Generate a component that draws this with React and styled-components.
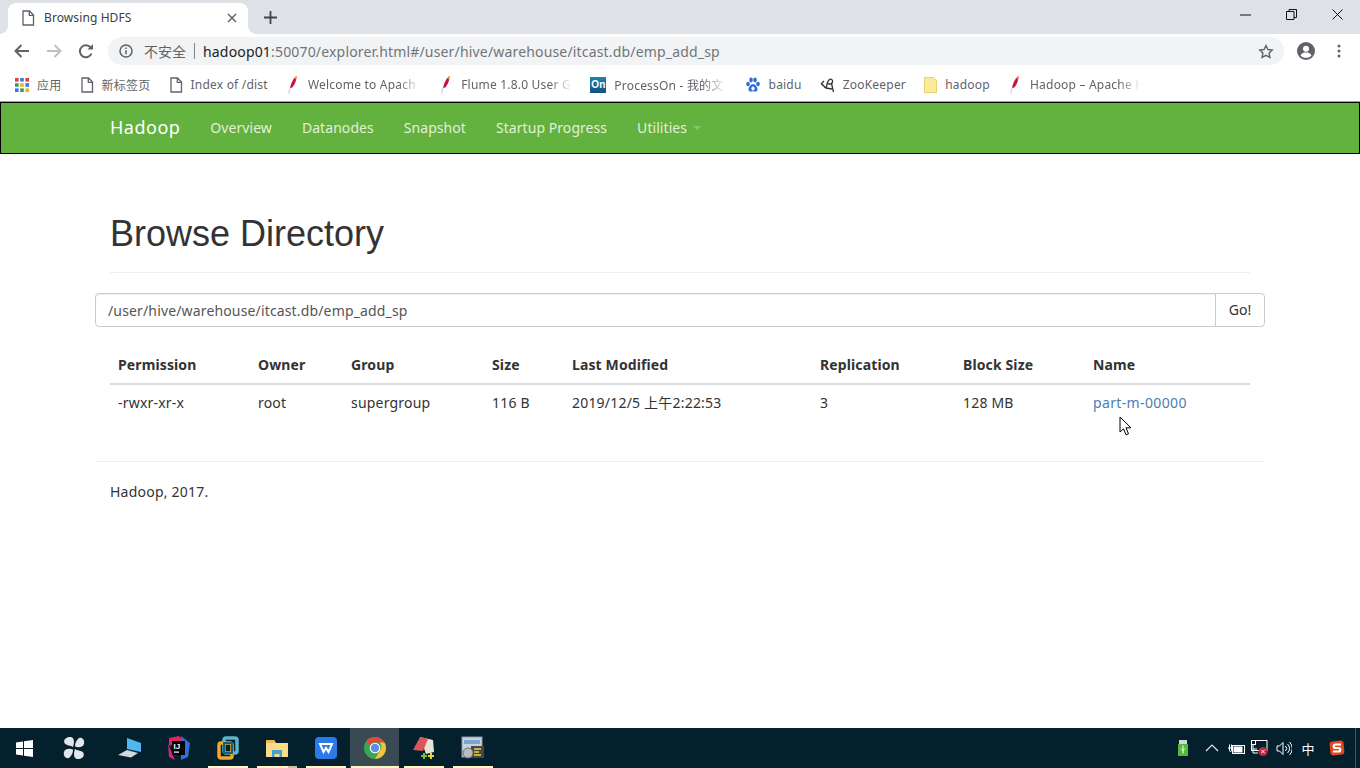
import React from "react";
import styled, { createGlobalStyle } from "styled-components";

const GlobalStyle = createGlobalStyle`
  html, body { margin: 0; padding: 0; height: 100%; background: #fff; }
  body {
    font-family: "Noto Sans", "Noto Sans CJK SC", sans-serif;
    font-size: 14px;
    color: #333;
    overflow: hidden;
  }
  * { box-sizing: border-box; }
`;

const PageIcon = () => (
  <svg width="14" height="16" viewBox="0 0 14 16" fill="none" stroke="#5f6368" strokeWidth="1.3">
    <path d="M2 1h6.500L12.500 5v10H2z" />
    <path d="M8.300 1v4.300h4.200" />
  </svg>
);

const Feather = () => (
  <svg width="14" height="18" viewBox="0 0 14 18">
    <path d="M10.500 0C7.500 2 5 7 4 12l2.300-.5C8.500 9 10.500 5 10.500 0z" fill="#c8123c" />
    <path d="M10.500 0c-.8 1-1.500 2-2 3l2 .2c.1-1 .1-2 0-3.200z" fill="#f29a3c" />
    <path d="M4 12C3.500 14 3 16 2.500 17.500" stroke="#d8cfe0" strokeWidth="1.200" fill="none" />
  </svg>
);

const AppsGrid = () => {
  const colors = ["#d8433b", "#3b78e7", "#d8433b", "#3b9c55", "#f2b01e", "#3b78e7", "#3b78e7", "#3b9c55", "#f2b01e"];
  return (
    <svg width="14" height="14" viewBox="0 0 14 14">
      {colors.map((c, i) => (
        <rect key={i} x={(i % 3) * 5.2} y={Math.floor(i / 3) * 5.2} width="3.600" height="3.600" fill={c} />
      ))}
    </svg>
  );
};

const OnLogo = () => <OnBadge>On</OnBadge>;

const Paw = () => (
  <svg width="16" height="16" viewBox="0 0 16 16" fill="#2f6fdc">
    <ellipse cx="3" cy="7" rx="1.800" ry="2.300" />
    <ellipse cx="6" cy="3" rx="1.800" ry="2.400" />
    <ellipse cx="10" cy="3" rx="1.800" ry="2.400" />
    <ellipse cx="13" cy="7" rx="1.800" ry="2.300" />
    <path d="M8 7c-2 0-4.500 3-4.500 5.500 0 2 2 2.500 4.500 1.800 2.500.7 4.500.2 4.500-1.800C12.500 10 10 7 8 7z" />
    <ellipse cx="8" cy="11.500" rx="1.600" ry="2" fill="#fff" />
  </svg>
);

const ZooIcon = () => (
  <svg width="15" height="16" viewBox="0 0 15 16" fill="none" stroke="#333" strokeWidth="1.300">
    <path d="M1 7c2 0 3 3 5 4 1-3 1-6 3-8 2-2 4 0 3.500 2S9.500 7.500 8 6.500" />
    <path d="M11.500 6.500L13.500 15M6 11l6 1M4 4L1 7" />
  </svg>
);

const FolderIcon = () => (
  <svg width="13" height="16" viewBox="0 0 13 16">
    <path d="M.5.500h9l3 3v12H.500z" fill="#fde99a" stroke="#e8cf78" />
  </svg>
);

const bookmarks = [
  { icon: <AppsGrid />, label: "应用" },
  { icon: <PageIcon />, label: "新标签页" },
  { icon: <PageIcon />, label: "Index of /dist" },
  { icon: <Feather />, label: "Welcome to Apach", clip: 113 },
  { icon: <Feather />, label: "Flume 1.8.0 User Gu", clip: 111 },
  { icon: <OnLogo />, label: "ProcessOn - 我的文", clip: 112 },
  { icon: <Paw />, label: "baidu" },
  { icon: <ZooIcon />, label: "ZooKeeper" },
  { icon: <FolderIcon />, label: "hadoop" },
  { icon: <Feather />, label: "Hadoop – Apache H", clip: 111 },
];

const columns = [
  { title: "Permission", width: 140, value: "-rwxr-xr-x" },
  { title: "Owner", width: 93, value: "root" },
  { title: "Group", width: 141, value: "supergroup" },
  { title: "Size", width: 80, value: "116 B" },
  { title: "Last Modified", width: 248, value: "2019/12/5 上午2:22:53" },
  { title: "Replication", width: 143, value: "3" },
  { title: "Block Size", width: 130, value: "128 MB" },
  { title: "Name", width: 165, value: "part-m-00000", link: true },
];

const navLinks = ["Overview", "Datanodes", "Snapshot", "Startup Progress"];

const runningApps = [
  {
    key: "laptop",
    icon: (
      <svg width="24" height="20" viewBox="0 0 24 20">
        <path d="M9 0l14 5v9l-14-3z" fill="#4fb6ee" />
        <path d="M0 17l9-5 11 3-7 4.500z" fill="#cfd8dc" />
      </svg>
    ),
  },
  {
    key: "idea",
    icon: (
      <svg width="24" height="24" viewBox="0 0 24 24">
        <path d="M2 2l10-2 4 4-14 6z" fill="#e0245e" />
        <path d="M14 0l9 7-2 14-7 3z" fill="#2f6fdc" />
        <path d="M1 8l7 16-6-3z" fill="#d6237f" />
        <rect x="5" y="5" width="13" height="14" fill="#000" />
        <text x="6.500" y="13" fontSize="8" fontWeight="700" fill="#fff" fontFamily="Liberation Sans">IJ</text>
        <rect x="7" y="15.500" width="5" height="1.200" fill="#fff" />
      </svg>
    ),
  },
  {
    key: "vmware",
    running: true,
    icon: (
      <svg width="22" height="24" viewBox="0 0 22 24" fill="none">
        <rect x="7" y="2" width="13" height="15" rx="2" stroke="#5fb4c8" strokeWidth="3.500" />
        <rect x="2" y="7" width="13" height="15" rx="2" stroke="#f0a92c" strokeWidth="3.500" />
        <rect x="7" y="7" width="8" height="10" stroke="#1a5f76" strokeWidth="2" />
      </svg>
    ),
  },
  {
    key: "files",
    running: true,
    stacked: true,
    icon: (
      <svg width="24" height="20" viewBox="0 0 24 20">
        <path d="M1 2h8l2 3h12v14H1z" fill="#f8dc8a" />
        <path d="M1 2h8l2 3H1z" fill="#e9bd55" />
        <path d="M7 12h10v7h-2.500v-3h-5v3H7z" fill="#3ea6c9" />
      </svg>
    ),
  },
  {
    key: "wps",
    running: true,
    icon: (
      <svg width="22" height="22" viewBox="0 0 22 22">
        <rect width="22" height="22" rx="4" fill="#2a7bea" />
        <path d="M5 7h12l-3.500 8-2.500-4-2.500 4z" fill="none" stroke="#fff" strokeWidth="2" />
      </svg>
    ),
  },
  {
    key: "chrome",
    active: true,
    running: true,
    icon: (
      <svg width="24" height="24" viewBox="0 0 24 24">
        <circle cx="12" cy="12" r="11" fill="#3aa655" />
        <path d="M12 1a11 11 0 0 1 9.500 5.500H12a5.500 5.500 0 0 0-5 3L3 5a11 11 0 0 1 9-4z" fill="#dd4b3e" />
        <path d="M21.500 6.500A11 11 0 0 1 12 23l4.700-8.300a5.500 5.500 0 0 0 0-8.200z" fill="#f6c433" />
        <circle cx="12" cy="12" r="5.300" fill="#fff" />
        <circle cx="12" cy="12" r="4.200" fill="#5d8fe8" />
      </svg>
    ),
  },
  {
    key: "eraser",
    running: true,
    icon: (
      <svg width="24" height="24" viewBox="0 0 24 24">
        <path d="M8 1l13 3 1 12-8 2z" fill="#e9e4d4" />
        <path d="M8 1l8 2-5 12-10-1z" fill="#d9565c" />
        <path d="M9 19h2v-2h2v2h2v2h-2v2h-2v-2H9z" fill="#6fc13a" />
        <path d="M16 19h2v-2h2v2h2v2h-2v2h-2v-2h-2z" fill="#f0d02c" />
      </svg>
    ),
  },
  {
    key: "tool",
    running: true,
    icon: (
      <svg width="24" height="24" viewBox="0 0 24 24">
        <rect x="1" y="1" width="20" height="20" fill="#c7d3dc" stroke="#8a98a3" />
        <rect x="3" y="4" width="16" height="4" fill="#7aa6d6" />
        <rect x="10" y="10" width="13" height="12" fill="#48483a" />
        <path d="M13 13h7M13 16h5M13 19h7" stroke="#e6d24c" strokeWidth="1.500" />
        <circle cx="7" cy="17" r="5" fill="#b8bcc0" stroke="#6d7276" />
      </svg>
    ),
  },
];

function App() {
  return (
    <>
      <GlobalStyle />
      <Screen>
        <TabStrip>
          <Tab>
            <PageIcon />
            <TabTitle>Browsing HDFS</TabTitle>
            <svg width="10" height="10" viewBox="0 0 10 10" stroke="#5f6368" strokeWidth="1.500">
              <path d="M1 1l8 8M9 1l-8 8" />
            </svg>
          </Tab>
          <NewTab>
            <svg width="13" height="13" viewBox="0 0 13 13" stroke="#444" strokeWidth="1.800">
              <path d="M6.500 0v13M0 6.500h13" />
            </svg>
          </NewTab>
          <WindowControls>
            <WindowButton>
              <svg width="11" height="2" viewBox="0 0 11 2" stroke="#111"><path d="M0 1h11" /></svg>
            </WindowButton>
            <WindowButton>
              <svg width="11" height="11" viewBox="0 0 11 11" fill="none" stroke="#111">
                <path d="M.5 2.500h7.500v8H.500z" />
                <path d="M3 2.500V.500h7.500v8H8" />
              </svg>
            </WindowButton>
            <WindowButton>
              <svg width="11" height="11" viewBox="0 0 11 11" stroke="#111"><path d="M.5.500l10 10M10.500.500l-10 10" /></svg>
            </WindowButton>
          </WindowControls>
        </TabStrip>

        <Toolbar>
          <NavButtons>
            <svg width="16" height="14" viewBox="0 0 16 14" fill="none" stroke="#5f6368" strokeWidth="2">
              <path d="M15 7H2M7.500 1L1.500 7l6 6" />
            </svg>
            <svg width="16" height="14" viewBox="0 0 16 14" fill="none" stroke="#bdc1c6" strokeWidth="2">
              <path d="M1 7h13M8.500 1l6 6-6 6" />
            </svg>
            <svg width="16" height="16" viewBox="0 0 16 16" fill="none" stroke="#5f6368" strokeWidth="2">
              <path d="M13.500 10.500a6 6 0 1 1-.6-5.500" />
              <path d="M15 1v5.500H9.500z" fill="#5f6368" stroke="none" />
            </svg>
          </NavButtons>
          <Omnibox>
            <svg width="14" height="14" viewBox="0 0 14 14" fill="none" stroke="#5f6368" strokeWidth="1.500">
              <circle cx="7" cy="7" r="6" />
              <path d="M7 6.200v4M7 3.500v1.500" />
            </svg>
            <Insecure>不安全</Insecure>
            <Separator />
            <Url>
              <strong>hadoop01</strong>:50070/explorer.html#/user/hive/warehouse/itcast.db/emp_add_sp
            </Url>
            <svg width="16" height="15" viewBox="0 0 16 15" fill="none" stroke="#5f6368" strokeWidth="1.400">
              <path d="M8 1.500l1.900 4 4.400.5-3.200 3 .8 4.400L8 11.300l-3.900 2.100.8-4.400-3.200-3 4.400-.5z" />
            </svg>
          </Omnibox>
          <ProfileArea>
            <svg width="18" height="18" viewBox="0 0 18 18">
              <circle cx="9" cy="9" r="9" fill="#5f6368" />
              <circle cx="9" cy="6.800" r="3" fill="#fff" />
              <path d="M3.500 13.500c1-2.500 3.500-3 5.500-3s4.500.5 5.500 3c-1.300 1.500-3.300 2.300-5.500 2.300s-4.200-.8-5.500-2.300z" fill="#fff" />
            </svg>
            <svg width="4" height="14" viewBox="0 0 4 14" fill="#5f6368">
              <circle cx="2" cy="2" r="1.500" />
              <circle cx="2" cy="7" r="1.500" />
              <circle cx="2" cy="12" r="1.500" />
            </svg>
          </ProfileArea>
        </Toolbar>

        <BookmarksBar>
          {bookmarks.map((b) => (
            <Bookmark key={b.label}>
              <BookmarkIcon>{b.icon}</BookmarkIcon>
              <BookmarkLabel $clip={b.clip}>{b.label}</BookmarkLabel>
            </Bookmark>
          ))}
        </BookmarksBar>

        <Navbar>
          <Brand>Hadoop</Brand>
          {navLinks.map((l) => (
            <NavLink key={l}>{l}</NavLink>
          ))}
          <NavLink>
            Utilities<Caret />
          </NavLink>
        </Navbar>

        <Main>
          <PageHeader>
            <Heading>Browse Directory</Heading>
          </PageHeader>

          <InputGroup>
            <PathInput readOnly value="/user/hive/warehouse/itcast.db/emp_add_sp" />
            <GoButton>Go!</GoButton>
          </InputGroup>

          <TableWrap>
            <FileTable>
              <colgroup>
                {columns.map((c) => (
                  <col key={c.title} width={c.width} />
                ))}
              </colgroup>
              <thead>
                <tr>
                  {columns.map((c) => (
                    <HeadCell key={c.title}>{c.title}</HeadCell>
                  ))}
                </tr>
              </thead>
              <tbody>
                <tr>
                  {columns.map((c) => (
                    <BodyCell key={c.title}>
                      {c.link ? <FileLink>{c.value}</FileLink> : c.value}
                    </BodyCell>
                  ))}
                </tr>
              </tbody>
            </FileTable>
          </TableWrap>

          <Rule />
          <Footer>Hadoop, 2017.</Footer>
        </Main>

        <Taskbar>
          <StartCell>
            <svg width="17" height="17" viewBox="0 0 17 17" fill="#fff">
              <path d="M0 2.500l7-1v6.500H0zM8 1.300L17 0v8H8zM0 9h7v6.500l-7-1zM8 9h9v8l-9-1.300z" />
            </svg>
          </StartCell>
          <SwirlCell>
            <svg width="22" height="24" viewBox="0 0 22 24" fill="#dfe6ec">
              <path d="M10 11C8 9 3 10 1.500 7 0 3 4 .5 8 1c3.500.5 3.500 6 2 10z" />
              <path d="M12 10.500c0-3 1-6 4-8.500 3-1 6 2 5 6-.8 3-5 4-9 2.500z" />
              <path d="M12 13c2 2 7 1 8.500 4 1.500 4-2.500 6.500-6.500 6-3.500-.5-3.500-6-2-10z" />
              <path d="M10 13.500c0 3-1 6-4 8.500-3 1-6-2-5-6 .8-3 5-4 9-2.500z" />
            </svg>
          </SwirlCell>
          {runningApps.map((app) => (
            <AppCell key={app.key} $active={app.active} $running={app.running} $stacked={app.stacked}>
              {app.icon}
            </AppCell>
          ))}
          <Tray>
            <TrayCell $wide>
              <svg width="10" height="16" viewBox="0 0 10 16">
                <rect x="1" y="0" width="8" height="4" fill="#cfd8dc" />
                <rect y="4" width="10" height="12" fill="#54b83a" />
                <path d="M5 5.500v8M3 8.500l2 2 2-2" stroke="#fff" fill="none" />
              </svg>
            </TrayCell>
            <TrayCell>
              <svg width="14" height="8" viewBox="0 0 14 8" fill="none" stroke="#e6e6e6" strokeWidth="1.200">
                <path d="M1 7l6-6 6 6" />
              </svg>
            </TrayCell>
            <TrayCell>
              <svg width="17" height="11" viewBox="0 0 17 11" fill="none" stroke="#fff">
                <rect x="4.500" y="2.500" width="12" height="8" />
                <rect x="6" y="4" width="8" height="5" fill="#fff" />
                <path d="M0 5h4M1.500 1.500v6a1 1 0 0 0 2 0v-6" />
              </svg>
            </TrayCell>
            <TrayCell>
              <svg width="18" height="16" viewBox="0 0 18 16" fill="none" stroke="#fff">
                <rect x=".5" y=".5" width="15.500" height="10" />
                <rect x=".5" y=".5" width="4" height="4" fill="#04202d" />
                <path d="M2 5v8h5M2 9h4" />
                <circle cx="12" cy="11.500" r="4.500" fill="#c8203f" stroke="none" />
                <path d="M10.200 9.700l3.600 3.600M13.800 9.700l-3.600 3.600" />
              </svg>
            </TrayCell>
            <TrayCell>
              <svg width="16" height="15" viewBox="0 0 16 15" fill="none" stroke="#fff">
                <path d="M1 5h2.500L7 1.500v12L3.500 10H1z" />
                <path d="M9.500 5a3.500 3.500 0 0 1 0 5M11.500 3a6 6 0 0 1 0 9M13.500 1a9 9 0 0 1 0 13" />
              </svg>
            </TrayCell>
            <TrayCell>
              <ImeLabel>中</ImeLabel>
            </TrayCell>
            <TrayCell $wide>
              <svg width="16" height="16" viewBox="0 0 16 16">
                <rect x="1" y="1" width="14" height="14" rx="3" fill="#e2471f" transform="rotate(-6 8 8)" />
                <path d="M12 4.500H6.500a1.500 1.500 0 0 0 0 3.500h3a1.500 1.500 0 0 1 0 3.500H4" fill="none" stroke="#fff" strokeWidth="2.200" />
              </svg>
            </TrayCell>
          </Tray>
          <ShowDesktop />
        </Taskbar>

        <Cursor>
          <svg width="13" height="20" viewBox="0 0 13 20">
            <path d="M1 1v15l3.500-3.200 2.500 6 2.500-1-2.500-6H12z" fill="#fff" stroke="#000" />
          </svg>
        </Cursor>
      </Screen>
    </>
  );
}

const Screen = styled.div`
  position: relative;
  display: flex;
  flex-direction: column;
  width: 1360px;
  height: 768px;
`;

const TabStrip = styled.div`
  display: flex;
  align-items: flex-end;
  height: 34px;
  background: #dee1e6;
  padding-left: 8px;
`;

const Tab = styled.div`
  position: relative;
  display: flex;
  align-items: center;
  width: 240px;
  height: 31px;
  padding: 0 11px 2px 13px;
  background: #fff;
  border-radius: 8px 8px 0 0;

  &::before,
  &::after {
    content: "";
    position: absolute;
    bottom: 0;
    width: 8px;
    height: 8px;
  }
  &::before {
    left: -8px;
    background: radial-gradient(circle at 0 0, #dee1e6 7.500px, #fff 8px);
  }
  &::after {
    right: -8px;
    background: radial-gradient(circle at 100% 0, #dee1e6 7.500px, #fff 8px);
  }
`;

const TabTitle = styled.span`
  flex: 1;
  margin-left: 9px;
  font-size: 12px;
  color: #3c4043;
  letter-spacing: 0.1px;
`;

const NewTab = styled.div`
  display: flex;
  align-items: center;
  height: 31px;
  margin-left: 16px;
  padding-bottom: 2px;
`;

const WindowControls = styled.div`
  display: flex;
  align-self: flex-start;
  margin-left: auto;
`;

const WindowButton = styled.div`
  display: flex;
  align-items: center;
  justify-content: center;
  width: 46px;
  height: 29px;
`;

const Toolbar = styled.div`
  display: flex;
  align-items: center;
  height: 34px;
  background: #fff;
`;

const NavButtons = styled.div`
  display: flex;
  align-items: center;
  gap: 16px;
  width: 108px;
  padding-left: 14px;
`;

const Omnibox = styled.div`
  display: flex;
  align-items: center;
  width: 1176px;
  height: 28px;
  padding: 0 10px 0 11px;
  background: #f1f3f4;
  border-radius: 14px;
`;

const Insecure = styled.span`
  margin-left: 11px;
  font-size: 14px;
  color: #5f6368;
`;

const Separator = styled.span`
  width: 1px;
  height: 16px;
  margin: 0 8px;
  background: #80868b;
`;

const Url = styled.span`
  flex: 1;
  font-size: 14px;
  letter-spacing: 0.17px;
  color: #70757a;

  strong {
    font-weight: 400;
    color: #202124;
  }
`;

const ProfileArea = styled.div`
  display: flex;
  align-items: center;
  gap: 22px;
  padding-left: 13px;
`;

const BookmarksBar = styled.div`
  display: flex;
  align-items: center;
  gap: 18.200px;
  height: 34px;
  padding-left: 15px;
  background: #fff;
  border-bottom: 1px solid #9aa0a6;
`;

const Bookmark = styled.div`
  display: flex;
  align-items: center;
  gap: 8px;
  font-size: 12px;
  letter-spacing: 0.2px;
  color: #5f6368;
`;

const BookmarkIcon = styled.span`
  display: flex;
  align-items: center;
  justify-content: center;
  height: 18px;
`;

const BookmarkLabel = styled.span`
  white-space: nowrap;
  ${(p) =>
    p.$clip &&
    `
    width: ${p.$clip}px;
    mask-image: linear-gradient(to right, #000 80%, transparent);
  `}
`;

const OnBadge = styled.span`
  display: flex;
  align-items: center;
  justify-content: center;
  width: 16px;
  height: 16px;
  background: linear-gradient(#1f83ad, #12507d);
  color: #fff;
  font-family: "Liberation Sans", sans-serif;
  font-size: 10px;
  font-weight: 700;
`;

const Navbar = styled.nav`
  display: flex;
  align-items: center;
  height: 52px;
  padding: 0 0 2px 109px;
  background: #63b13e;
  border: 1px solid #000;
`;

const Brand = styled.span`
  margin-right: 30px;
  font-size: 18px;
  letter-spacing: 0.5px;
  color: #fff;
`;

const NavLink = styled.span`
  display: flex;
  align-items: center;
  margin-right: 30px;
  font-size: 14px;
  letter-spacing: 0.06px;
  color: #e3f0d9;
`;

const Caret = styled.span`
  width: 0;
  height: 0;
  margin-left: 6px;
  margin-top: 2px;
  border-top: 4px solid #8fc173;
  border-left: 4px solid transparent;
  border-right: 4px solid transparent;
`;

const Main = styled.main`
  flex: 1;
  width: 1170px;
  margin: 0 auto;
`;

const PageHeader = styled.div`
  margin: 60px 15px 20px;
  padding-bottom: 8px;
  border-bottom: 1px solid #eee;
`;

const Heading = styled.h1`
  margin: 0 0 10px;
  font-family: "Liberation Sans", Arial, sans-serif;
  font-size: 36px;
  font-weight: 500;
  line-height: 1.1;
  color: #333;
`;

const InputGroup = styled.div`
  display: flex;
  height: 34px;
`;

const PathInput = styled.input`
  flex: 1;
  padding: 7px 12px 5px;
  font-family: inherit;
  font-size: 14px;
  letter-spacing: 0.15px;
  color: #555;
  border: 1px solid #ccc;
  border-radius: 4px 0 0 4px;
  box-shadow: inset 0 1px 1px rgba(0, 0, 0, 0.075);
  outline: none;
`;

const GoButton = styled.button`
  width: 50px;
  margin-left: -1px;
  font-family: inherit;
  font-size: 14px;
  color: #333;
  background: #fff;
  border: 1px solid #ccc;
  border-radius: 0 4px 4px 0;
`;

const TableWrap = styled.div`
  margin: 20px 15px;
`;

const FileTable = styled.table`
  width: 100%;
  table-layout: fixed;
  border-collapse: collapse;
  line-height: 20px;
`;

const HeadCell = styled.th`
  padding: 8px;
  font-weight: 700;
  letter-spacing: 0.12px;
  text-align: left;
  border-bottom: 2px solid #ddd;
`;

const BodyCell = styled.td`
  padding: 8px;
  letter-spacing: 0.2px;
`;

const FileLink = styled.a`
  letter-spacing: 0.36px;
  color: #4a80b5;
`;

const Rule = styled.hr`
  margin: 40px 0 20px;
  border: 0;
  border-top: 1px solid #eee;
`;

const Footer = styled.p`
  margin: 0 15px;
  line-height: 20px;
  letter-spacing: 0.22px;
`;

const Taskbar = styled.footer`
  display: flex;
  height: 40px;
  background: #04202d;
`;

const StartCell = styled.div`
  display: flex;
  align-items: center;
  justify-content: center;
  width: 49px;
`;

const SwirlCell = styled(StartCell)`
  width: 56px;
  padding-right: 6px;
`;

const indicator = (p) => {
  if (!p.$running) return "none";
  if (p.$stacked) return "linear-gradient(to right, #fbf7c4 31px, #c9c69e 31px)";
  return "linear-gradient(#fbf7c4, #fbf7c4)";
};

const AppCell = styled.div`
  display: flex;
  align-items: center;
  justify-content: center;
  width: 49px;
  background-color: ${(p) => (p.$active ? "#3a4a52" : "transparent")};
  background-image: ${indicator};
  background-size: ${(p) => (p.$active ? "48px" : "40px")} 2px;
  background-position: bottom center;
  background-repeat: no-repeat;
`;

const Tray = styled.div`
  display: flex;
  align-items: stretch;
  margin-left: auto;
`;

const TrayCell = styled.div`
  display: flex;
  align-items: center;
  justify-content: center;
  width: ${(p) => (p.$wide ? "34px" : "24px")};
`;

const ImeLabel = styled.span`
  font-size: 13px;
  color: #fff;
`;

const ShowDesktop = styled.div`
  width: 1px;
  margin: 0 4px 0 1px;
  background: #44565f;
`;

const Cursor = styled.div`
  position: absolute;
  left: 1119px;
  top: 416px;
  line-height: 0;
`;

export default App;
